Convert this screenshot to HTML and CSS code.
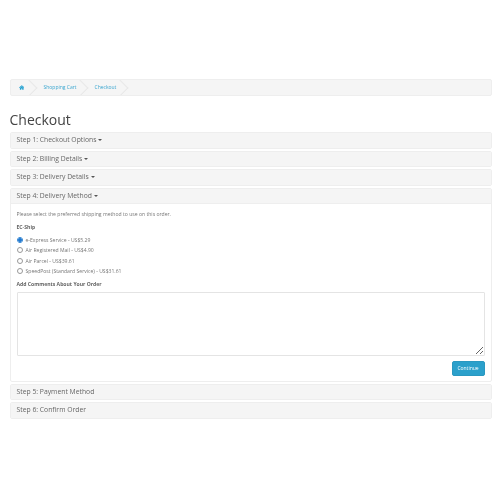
FILE: index.html
```html
<!DOCTYPE html>
<html lang="en">
<head>
<meta charset="utf-8">
<title>Checkout</title>
<link rel="stylesheet" href="styles.css">
</head>
<body>
<div class="page">
  <ul class="breadcrumb">
    <li class="crumb crumb-home"><a href="#" aria-label="Home"><svg class="home" viewBox="0 0 12 10"><path d="M6 0 L12 5 L11 6 L6 2 L1 6 L0 5 Z M2 6 L6 3 L10 6 V10 H7 V7 H5 V10 H2 Z"/></svg></a></li>
    <li class="crumb crumb-cart"><a href="#">Shopping Cart</a></li>
    <li class="crumb crumb-checkout"><a href="#">Checkout</a></li>
  </ul>
  <h1 class="title">Checkout</h1>
  <div class="panels">
    <div class="panel"><div class="panel-heading">Step 1: Checkout Options <span class="caret"></span></div></div>
    <div class="panel"><div class="panel-heading">Step 2: Billing Details <span class="caret"></span></div></div>
    <div class="panel"><div class="panel-heading">Step 3: Delivery Details <span class="caret"></span></div></div>
    <div class="panel">
      <div class="panel-heading">Step 4: Delivery Method <span class="caret"></span></div>
      <div class="panel-body">
        <p class="intro">Please select the preferred shipping method to use on this order.</p>
        <p class="label">EC-Ship</p>
        <div class="options">
          <label class="option"><input type="radio" name="ship" checked> e-Express Service - US$5.29</label>
          <label class="option"><input type="radio" name="ship"> Air Registered Mail - US$4.90</label>
          <label class="option"><input type="radio" name="ship"> Air Parcel - US$39.61</label>
          <label class="option"><input type="radio" name="ship"> SpeedPost (Standard Service) - US$31.61</label>
        </div>
        <p class="label comments-label">Add Comments About Your Order</p>
        <textarea class="comments"></textarea>
        <div class="actions"><button class="btn" type="button">Continue</button></div>
      </div>
    </div>
    <div class="panel"><div class="panel-heading">Step 5: Payment Method</div></div>
    <div class="panel"><div class="panel-heading">Step 6: Confirm Order</div></div>
  </div>
</div>
</body>
</html>
```
FILE: styles.css
```css
* { box-sizing: border-box; }
html, body { margin: 0; padding: 0; background: #fff; }
body {
  font-family: "Open Sans", "Liberation Sans", sans-serif;
  color: #666;
  width: 500px;
  height: 500px;
  overflow: hidden;
}
.page { padding: 79px 8.5px 0 9.5px; filter: blur(0.4px); }
.breadcrumb {
  list-style: none;
  margin: 0;
  padding: 0;
  height: 16.5px;
  display: flex;
  align-items: stretch;
  background: #f5f5f5;
  border: 1px solid #eeeeee;
  border-radius: 2px;
  overflow: hidden;
  font-size: 5px;
}
.crumb { position: relative; display: flex; align-items: center; }
.crumb-home { width: 24px; padding-left: 8px; }
.crumb-cart { width: 51px; padding-left: 9px; }
.crumb-checkout { width: 40px; padding-left: 9px; }
.crumb a { color: #3aa6d0; text-decoration: none; white-space: nowrap; }
.crumb::after {
  content: "";
  position: absolute;
  right: 0;
  top: 1.5px;
  width: 11px;
  height: 11px;
  border-top: 1px solid #e8e8e8;
  border-right: 1px solid #e8e8e8;
  transform: rotate(45deg);
}
.home { display: block; width: 5.5px; height: 5px; fill: #23a1d1; }
.title {
  margin: 0;
  padding-top: 13px;
  font-size: 14px;
  line-height: 22px;
  font-weight: 400;
  color: #444;
}
.panels { display: flex; flex-direction: column; gap: 2px; margin-top: 1.5px; }
.panel {
  border: 1px solid #eeeeee;
  border-radius: 2px;
  background: #fff;
}
.panel-heading {
  height: 14.5px;
  background: #f5f5f5;
  padding-left: 6px;
  font-size: 6.8px;
  line-height: 14.5px;
  color: #666;
}
.caret {
  display: inline-block;
  vertical-align: middle;
  margin-left: 0;
  width: 0;
  height: 0;
  border-top: 2px solid #555;
  border-left: 2px solid transparent;
  border-right: 2px solid transparent;
}
.panel-body {
  border-top: 1px solid #eeeeee;
  padding: 7px 6px 5px 6px;
  font-size: 5.1px;
  color: #777;
}
.intro { margin: 0; line-height: 7px; }
.label { margin: 5.5px 0 0; line-height: 7px; font-weight: 700; color: #666; }
.options { display: flex; flex-direction: column; margin-top: 3.75px; }
.option { display: flex; align-items: center; gap: 3px; height: 10.5px; white-space: nowrap; }
.option input {
  appearance: none;
  width: 6px;
  height: 6px;
  margin: 0;
  border: 0.5px solid #999;
  border-radius: 50%;
  background: #fff;
}
.option input:checked {
  border-color: #2a7fd0;
  background: radial-gradient(circle, #1f78d1 0 55%, #fff 65%);
}
.comments-label { margin-top: 4.25px; }
.comments {
  display: block;
  width: 100%;
  height: 63.5px;
  margin: 4.5px 0 0;
  border: 1px solid #e4e4e4;
  border-radius: 1px;
  background: #fff;
  resize: vertical;
}
.actions { display: flex; justify-content: flex-end; margin-top: 5.5px; }
.btn {
  width: 33px;
  height: 14.5px;
  padding: 0;
  border: 1px solid #2a98c0;
  border-radius: 2px;
  background: #2ba0cb;
  color: #fff;
  font-family: inherit;
  font-size: 5px;
}
```
